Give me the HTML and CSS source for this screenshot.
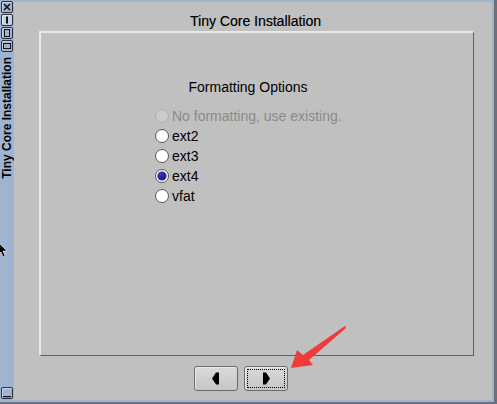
FILE: index.html
```html
<!DOCTYPE html>
<html>
<head>
<meta charset="utf-8">
<link rel="stylesheet" href="styles.css">
</head>
<body>
<div class="screen">
  <div class="sidebar">
    <div class="tb-btn"><svg width="12" height="12" viewBox="0 0 12 12"><path d="M3 3 L9 9 M9 3 L3 9" stroke="#111" stroke-width="1.6"/></svg></div>
    <div class="tb-btn hot"><svg width="12" height="12" viewBox="0 0 12 12"><rect x="5" y="2.5" width="2" height="7" fill="#111"/></svg></div>
    <div class="tb-btn"><svg width="12" height="12" viewBox="0 0 12 12"><rect x="3.5" y="2.5" width="5" height="7" fill="none" stroke="#111" stroke-width="1"/></svg></div>
    <div class="tb-btn"><svg width="12" height="12" viewBox="0 0 12 12"><rect x="2.5" y="3.5" width="7" height="5" fill="none" stroke="#111" stroke-width="1"/></svg></div>
    <div class="vtitle">Tiny Core Installation</div>
    <div class="spacer"></div>
    <div class="tb-btn"><svg width="12" height="12" viewBox="0 0 12 12"><rect x="2" y="9" width="8" height="1.2" fill="#111"/></svg></div>
  </div>
  <div class="window">
    <div class="title">Tiny Core Installation</div>
    <div class="panel">
      <div class="group">
        <div class="group-label">Formatting Options</div>
        <div class="radio-row disabled"><span class="radio"></span><span>No formatting, use existing.</span></div>
        <div class="radio-row"><span class="radio"></span><span>ext2</span></div>
        <div class="radio-row"><span class="radio"></span><span>ext3</span></div>
        <div class="radio-row"><span class="radio checked"></span><span>ext4</span></div>
        <div class="radio-row"><span class="radio"></span><span>vfat</span></div>
      </div>
    </div>
    <div class="buttons">
      <div class="btn"><svg width="8" height="13" viewBox="0 0 8 13"><polygon points="0,6.5 4,0.5 7,0.5 7,12.5 4,12.5" fill="#000"/></svg></div>
      <div class="btn focus"><div class="focus-ring"><svg width="8" height="13" viewBox="0 0 8 13"><polygon points="1,0.5 4,0.5 8,6.5 4,12.5 1,12.5" fill="#000"/></svg></div></div>
    </div>
  </div>
  <svg class="cursor" width="10" height="16" viewBox="0 0 10 16"><polygon points="-2,0 7,9 3,9 5,14 3,15 1,10 -2,13" fill="#000" stroke="#fff" stroke-width="0.6"/></svg>
  <svg class="arrow" width="66" height="50" viewBox="0 0 66 50"><polygon points="60,3 61,5 24,37 28,42 6,45 12,27 18,32" fill="#ef3b3b"/></svg>
</div>
</body>
</html>
```
FILE: styles.css
```css
* { box-sizing: border-box; }
html, body { margin: 0; padding: 0; }
body {
  width: 497px;
  height: 404px;
  overflow: hidden;
  background: #c0c0c0;
  font-family: "Liberation Sans", Arial, sans-serif;
}
.screen {
  position: relative;
  width: 497px;
  height: 404px;
  display: flex;
  background: #c0c0c0;
  border-right: 3px solid #6f7078;
  border-bottom: 2px solid #6f7078;
}
.sidebar {
  width: 14px;
  flex: none;
  background: #9fb4d1;
  display: flex;
  flex-direction: column;
  align-items: center;
  padding-top: 1px;
  padding-bottom: 3px;
  gap: 1px;
}
.tb-btn {
  width: 12px;
  height: 12px;
  border: 1px solid #2a2f3a;
  border-radius: 2px;
  background: #9fb4d1;
  box-shadow: inset 1px 1px 0 #c9d6e8;
  display: flex;
  align-items: center;
  justify-content: center;
}
.tb-btn svg { display: block; margin: -1px; }
.tb-btn.hot { background: #c2d1e6; box-shadow: inset 1px 1px 0 #e4ecf6; }
.vtitle {
  margin-top: 4px;
  writing-mode: vertical-rl;
  transform: rotate(180deg);
  font-size: 12px;
  font-weight: bold;
  line-height: 14px;
  color: #000;
  white-space: nowrap;
}
.spacer { flex: 1; }
.window {
  flex: 1;
  display: flex;
  flex-direction: column;
  border-top: 2px solid #9fb4d1;
  border-right: 2px solid #9fb4d1;
  border-bottom: 2px solid #9fb4d1;
}
.title {
  padding-top: 11px;
  padding-left: 5px;
  height: 27px;
  margin-bottom: 2px;
  text-align: center;
  font-size: 14px;
  line-height: 16px;
  color: #000;
  text-shadow: 0.4px 0.4px 0 rgba(0,0,0,0.45);
}
.panel {
  margin-left: 25px;
  width: 435px;
  height: 325px;
  border-top: 2px solid #e9e9e9;
  border-left: 2px solid #e9e9e9;
  border-right: 1px solid #5f5f5f;
  border-bottom: 1px solid #5f5f5f;
  padding-top: 46px;
  padding-left: 114px;
}
.group { width: 186px; }
.group-label {
  text-align: center;
  font-size: 14px;
  line-height: 16px;
  color: #000;
  margin-bottom: 11px;
}
.radio-row {
  height: 20px;
  display: flex;
  align-items: center;
  gap: 3px;
  font-size: 14px;
  color: #000;
  white-space: nowrap;
}
.radio-row.disabled { color: #8a8a8a; }
.radio {
  width: 14px;
  height: 14px;
  flex: none;
  border-radius: 50%;
  border: 1px solid #5c5c5c;
  background: radial-gradient(circle at 60% 60%, #ffffff 55%, #dcdcdc 100%);
  position: relative;
}
.radio-row.disabled .radio {
  border-color: #b0b0b0;
  background: #cbcbcb;
}
.radio.checked::after {
  content: "";
  position: absolute;
  left: 2px;
  top: 2px;
  width: 8px;
  height: 8px;
  border-radius: 50%;
  background: radial-gradient(circle at 40% 35%, #3a3ab8 0%, #14148a 70%);
  box-shadow: 0 0 0 0.6px #0c0c50;
}
.buttons {
  margin-top: 10px;
  padding-left: 180px;
  display: flex;
  gap: 6px;
}
.btn {
  width: 44px;
  height: 25px;
  border: 1px solid #6a6a6a;
  border-radius: 3px;
  background: linear-gradient(#dadada, #c6c6c6);
  box-shadow: inset 1px 1px 0 #ececec;
  display: flex;
  align-items: center;
  justify-content: center;
}
.btn svg { display: block; }
.btn.focus { padding: 2px; }
.focus-ring {
  width: 100%;
  height: 100%;
  border: 1px dotted #000;
  display: flex;
  align-items: center;
  justify-content: center;
}
.cursor {
  position: absolute;
  left: 0;
  top: 242px;
}
.arrow {
  position: absolute;
  left: 285px;
  top: 323px;
}
```
